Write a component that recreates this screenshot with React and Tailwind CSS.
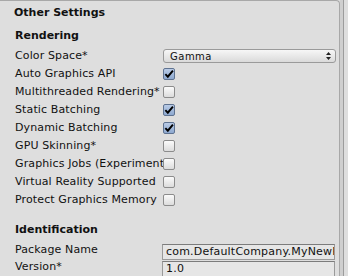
import React from 'react';

const font = { fontFamily: '"DejaVu Sans", Verdana, sans-serif' };

function Checkbox({ checked }) {
  if (checked) {
    return (
      <div className="w-[12px] h-[12px] rounded-[2px] border border-[#5f7391] bg-gradient-to-b from-[#b9cbe6] to-[#8ea9d0] flex items-center justify-center">
        <svg width="11" height="10" viewBox="0 0 11 10">
          <path d="M1.5 5.2 L4.2 8 L9.8 1.2" fill="none" stroke="#000" strokeWidth="2.1" />
        </svg>
      </div>
    );
  }
  return (
    <div className="w-[12px] h-[12px] rounded-[2px] border border-[#8c8c8c] bg-gradient-to-b from-[#fbfbfb] to-[#dcdcdc]" />
  );
}

function Row({ label, children }) {
  return (
    <div className="flex items-center h-[18px]">
      <div className="w-[163px] pl-[15px] pr-[2px] overflow-hidden whitespace-nowrap text-[11px] tracking-[0.12px] text-[#111]">
        {label}
      </div>
      {children}
    </div>
  );
}

function Field({ label, value }) {
  return (
    <div className="flex items-center h-[17px]">
      <div className="w-[162px] pl-[15px] overflow-hidden whitespace-nowrap text-[11px] tracking-[0.12px] text-[#111] -mt-[2px]">
        {label}
      </div>
      <div className="w-[173px] h-[16px] border border-[#9a9a9a] border-t-[#7c7c7c] bg-[#e6e6e6] pl-[3px] overflow-hidden whitespace-nowrap text-[11px] tracking-[0.2px] leading-[14px] text-[#111]">
        {value}
      </div>
    </div>
  );
}

const toggles = [
  ['Auto Graphics API', true],
  ['Multithreaded Rendering*', false],
  ['Static Batching', true],
  ['Dynamic Batching', true],
  ['GPU Skinning*', false],
  ['Graphics Jobs (Experimental)*', false],
  ['Virtual Reality Supported', false],
  ['Protect Graphics Memory', false],
];

export default function App() {
  return (
    <div className="w-[348px] h-[276px] bg-[#dedede] flex overflow-hidden" style={font}>
      <div className="w-[340px] border-t border-r border-[#a8a8a8] rounded-tr-[4px]">
        <div className="h-[24px] flex items-center pl-[14px] text-[11px] font-bold text-[#111]">
          Other Settings
        </div>

        <div className="h-[18px] mt-[2px] flex items-center pl-[15px] text-[11px] font-bold text-[#111]">
          Rendering
        </div>

        <div className="mt-[2px]">
          <Row label="Color Space*">
            <div className="w-[173px] h-[14px] rounded-[3px] border border-[#9a9a9a] bg-gradient-to-b from-[#f7f7f7] to-[#dadada] flex items-center justify-between pl-[6px] pr-[4px] text-[10px] text-[#111]">
              <span className="tracking-[0.5px]">Gamma</span>
              <svg width="5" height="8" viewBox="0 0 5 8">
                <path d="M2.5 0 L5 3 L0 3 Z M2.5 8 L5 5 L0 5 Z" fill="#222" />
              </svg>
            </div>
          </Row>
          {toggles.map(([label, on]) => (
            <Row key={label} label={label}>
              <Checkbox checked={on} />
            </Row>
          ))}
        </div>

        <div className="h-[18px] mt-[12px] flex items-center pl-[15px] text-[11px] font-bold text-[#111]">
          Identification
        </div>
        <div className="mt-[4px]">
          <Field label="Package Name" value="com.DefaultCompany.MyNewProject" />
          <Field label="Version*" value="1.0" />
        </div>
      </div>
      <div className="w-[3px] bg-[#cfcfcf]" />
      <div className="w-px bg-[#9c9c9c]" />
      <div className="flex-1" />
    </div>
  );
}
